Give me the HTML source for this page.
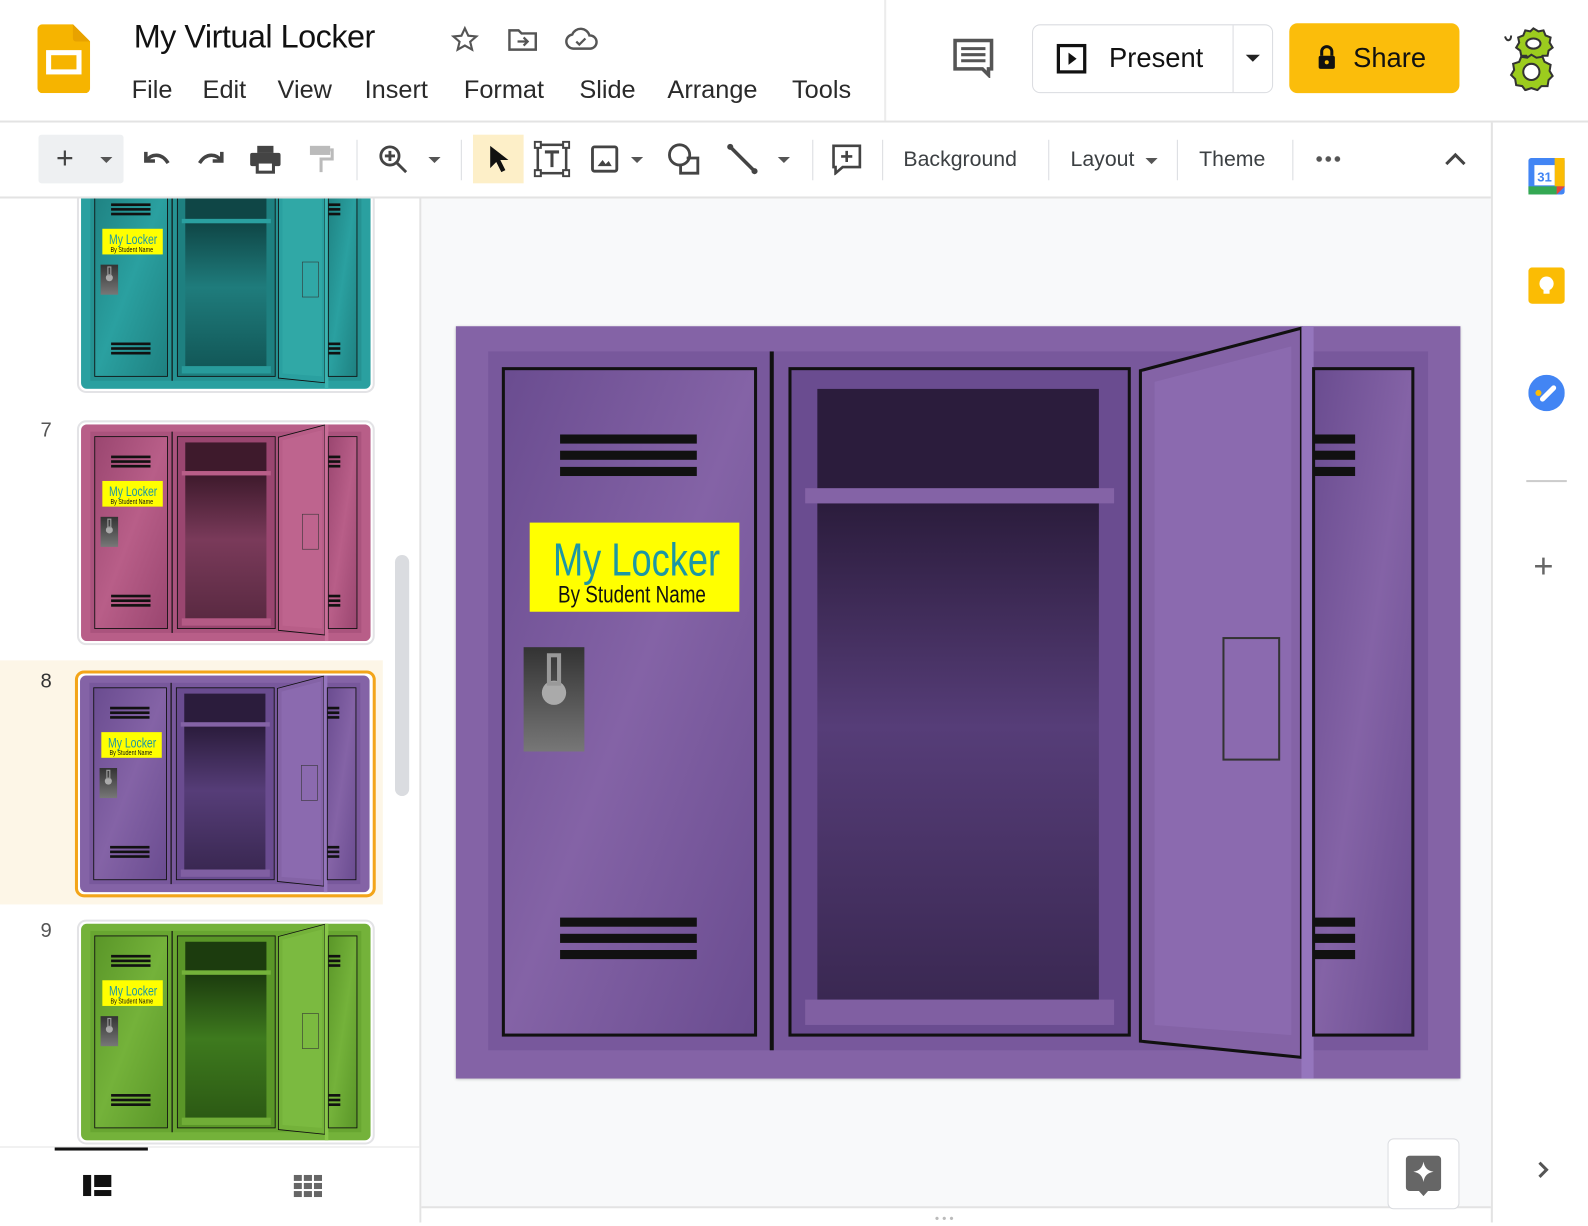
<!DOCTYPE html>
<html><head><meta charset="utf-8">
<style>
*{box-sizing:border-box;margin:0;padding:0}
html,body{width:1588px;height:1222px;overflow:hidden;background:#fff;font-family:"Liberation Sans",sans-serif;color:#222}
#w{position:absolute;left:0;top:0;width:1568px;height:1207px;transform:scale(1.0128);transform-origin:0 0;background:#fff}
.a{position:absolute}
.menu span{position:absolute;top:75px;font-size:25px;color:#2a2a2a}
.tb{position:absolute;top:157px;transform:translate(-50%,-50%)}
.tt{position:absolute;top:146px;font-size:21px;color:#3c4043}
.sep{position:absolute;top:138px;width:1px;height:40px;background:#dadce0}
.num{position:absolute;left:40px;font-size:20px;color:#555}
.th{position:absolute;left:76px;width:294px;height:222px;border:2px solid #e3e3e6;border-radius:9px;background:#fff;padding:2px;overflow:hidden}
.th svg{display:block;width:286px;height:214px;border-radius:6px}
</style></head><body>
<div id="w">
<!-- header -->
<div class="a" style="left:0;top:119px;width:1568px;height:2px;background:#e3e3e3"></div>
<div class="a" style="left:873px;top:0;width:2px;height:119px;background:#ececec"></div>
<svg class="a" style="left:37px;top:24px" width="52" height="68" viewBox="0 0 52 68"><path d="M5 0h30l17 17v46a5 5 0 0 1-5 5H5a5 5 0 0 1-5-5V5a5 5 0 0 1 5-5z" fill="#f6b400"/><path d="M35 0l17 17H38a3 3 0 0 1-3-3z" fill="#e8a200"/><rect x="11" y="28" width="30" height="19" fill="none" stroke="#fff" stroke-width="5"/></svg>
<div class="a" style="left:132px;top:18px;font-size:32px;color:#111;letter-spacing:-.5px">My Virtual Locker</div>
<svg class="a" style="left:445px;top:25px" width="28" height="28" viewBox="0 0 24 24"><path d="M12 2.5l2.9 6.3 6.8.6-5.2 4.5 1.6 6.7L12 17.1l-6.1 3.5 1.6-6.7L2.3 9.4l6.8-.6z" fill="none" stroke="#555" stroke-width="1.8"/></svg>
<svg class="a" style="left:501px;top:26px" width="30" height="26" viewBox="0 0 30 26"><path d="M2 4h9l3 3h14v16H2z" fill="none" stroke="#555" stroke-width="2.4"/><path d="M10 15h9M16 11l4 4-4 4" fill="none" stroke="#555" stroke-width="2.2"/></svg>
<svg class="a" style="left:557px;top:27px" width="34" height="24" viewBox="0 0 34 24"><path d="M9 21a7 7 0 0 1-1-13.9A9 9 0 0 1 25 8a6.5 6.5 0 0 1 1 13z" fill="none" stroke="#555" stroke-width="2.4"/><path d="M12 14l3 3 6-6" fill="none" stroke="#555" stroke-width="2.2"/></svg>
<div class="menu"><span style="left:130px">File</span><span style="left:200px">Edit</span><span style="left:274px">View</span><span style="left:360px">Insert</span><span style="left:458px">Format</span><span style="left:572px">Slide</span><span style="left:659px">Arrange</span><span style="left:782px">Tools</span></div>
<svg class="a" style="left:940px;top:37px" width="42" height="40" viewBox="0 0 42 40"><path d="M3 3h36v28h-3v6l-6-6H3z" fill="none" stroke="#555" stroke-width="3.5"/><path d="M9 11h24M9 17h24M9 23h24" stroke="#555" stroke-width="3"/></svg>
<div class="a" style="left:1019px;top:24px;width:238px;height:68px;border:1.5px solid #dadce0;border-radius:8px"></div>
<div class="a" style="left:1217px;top:25px;width:1px;height:66px;background:#dadce0"></div>
<svg class="a" style="left:1043px;top:43px" width="30" height="30" viewBox="0 0 30 30"><rect x="2" y="2" width="26" height="26" fill="none" stroke="#111" stroke-width="3.2"/><path d="M12 9l8 6-8 6z" fill="#111"/></svg>
<div class="a" style="left:1095px;top:42px;font-size:27px;color:#111">Present</div>
<div class="a" style="left:1230px;top:54px;border-left:7px solid transparent;border-right:7px solid transparent;border-top:7px solid #222"></div>
<div class="a" style="left:1273px;top:23px;width:168px;height:69px;background:#fbbd0b;border-radius:8px"></div>
<svg class="a" style="left:1300px;top:44px" width="20" height="26" viewBox="0 0 20 26"><path d="M5 11V7a5 5 0 0 1 10 0v4" fill="none" stroke="#111" stroke-width="3"/><rect x="2" y="11" width="16" height="13" rx="2" fill="#111"/><circle cx="10" cy="17.5" r="2" fill="#fbbd0b"/></svg>
<div class="a" style="left:1336px;top:42px;font-size:27px;color:#111">Share</div>
<svg class="a" style="left:1478px;top:26px" width="66" height="64" viewBox="0 0 66 64"><g fill="#9ccc1e" stroke="#333" stroke-width="2"><path d="M36 2l5 3 5-1 2 5 5 2-1 5 3 5-4 3-1 5-5 0-3 4-5-2-5 2-3-4-5 0-1-5-4-3 3-5-1-5 5-2 2-5 5 1z"/><path d="M34 28l5 3 6-1 2 5 6 3-1 6 3 5-4 4-1 6-6 0-4 4-6-2-6 2-3-4-6-1-1-6-4-4 3-5-1-6 6-2 2-5 6 1z"/></g><ellipse cx="36" cy="17" rx="7" ry="5" fill="#fff" stroke="#333" stroke-width="2"/><circle cx="34" cy="45" r="8" fill="#fff" stroke="#333" stroke-width="2"/><path d="M8 10c2 6 6 4 6-1" fill="none" stroke="#333" stroke-width="2"/></svg>
<!-- toolbar -->
<div class="a" style="left:0;top:194px;width:1472px;height:2px;background:#e3e3e3"></div>
<div class="a" style="left:1472px;top:121px;width:2px;height:1086px;background:#e3e3e3"></div>
<div class="a" style="left:38px;top:133px;width:84px;height:48px;background:#eef0f2;border-radius:3px"></div>
<div class="tb" style="left:64px;font-size:30px;color:#444">+</div>
<div class="a" style="left:99px;top:155px;border-left:6px solid transparent;border-right:6px solid transparent;border-top:6px solid #555"></div>
<svg class="tb" style="left:154px" width="32" height="24" viewBox="0 0 32 24"><path d="M6 5v9h9" fill="none" stroke="#444" stroke-width="3.5"/><path d="M6 14c5-7 15-9 22 2" fill="none" stroke="#444" stroke-width="3.5"/></svg>
<svg class="tb" style="left:209px" width="32" height="24" viewBox="0 0 32 24"><path d="M26 5v9h-9" fill="none" stroke="#444" stroke-width="3.5"/><path d="M26 14c-5-7-15-9-22 2" fill="none" stroke="#444" stroke-width="3.5"/></svg>
<svg class="tb" style="left:262px" width="32" height="30" viewBox="0 0 32 30"><rect x="8" y="2" width="16" height="7" fill="#444"/><rect x="1" y="9" width="30" height="13" rx="2" fill="#444"/><rect x="8" y="18" width="16" height="10" fill="#fff" stroke="#444" stroke-width="3"/></svg>
<svg class="tb" style="left:317px" width="26" height="30" viewBox="0 0 26 30"><rect x="2" y="2" width="20" height="9" fill="#bbb"/><path d="M22 6h2v9H13v13" fill="none" stroke="#bbb" stroke-width="3"/></svg>
<div class="sep" style="left:352px"></div>
<svg class="tb" style="left:388px" width="32" height="32" viewBox="0 0 32 32"><circle cx="13" cy="13" r="9" fill="none" stroke="#444" stroke-width="2.8"/><path d="M20 20l9 9M13 8v10M8 13h10" stroke="#444" stroke-width="2.8"/></svg>
<div class="a" style="left:423px;top:155px;border-left:6px solid transparent;border-right:6px solid transparent;border-top:6px solid #555"></div>
<div class="sep" style="left:455px"></div>
<div class="a" style="left:467px;top:133px;width:50px;height:48px;background:#fdefc8"></div>
<svg class="tb" style="left:492px" width="22" height="30" viewBox="0 0 22 30"><path d="M3 2v22l6-6 5 10 4-2-5-10h8z" fill="#111"/></svg>
<svg class="tb" style="left:545px" width="36" height="36" viewBox="0 0 36 36"><rect x="4" y="4" width="28" height="28" fill="none" stroke="#444" stroke-width="2.5"/><g fill="#fff" stroke="#444" stroke-width="2"><rect x="1" y="1" width="6" height="6"/><rect x="29" y="1" width="6" height="6"/><rect x="1" y="29" width="6" height="6"/><rect x="29" y="29" width="6" height="6"/></g><path d="M11 11h14M18 11v15" stroke="#444" stroke-width="3"/></svg>
<svg class="tb" style="left:597px" width="28" height="28" viewBox="0 0 28 28"><rect x="2" y="2" width="24" height="24" rx="2" fill="none" stroke="#444" stroke-width="2.8"/><path d="M7 21l5-6 3 4 3-3 3 5z" fill="#444"/></svg>
<div class="a" style="left:623px;top:155px;border-left:6px solid transparent;border-right:6px solid transparent;border-top:6px solid #555"></div>
<svg class="tb" style="left:675px" width="34" height="34" viewBox="0 0 34 34"><circle cx="13" cy="13" r="10" fill="none" stroke="#444" stroke-width="2.8"/><path d="M20 16h11v15H14v-9" fill="none" stroke="#444" stroke-width="2.8"/></svg>
<svg class="tb" style="left:733px" width="32" height="32" viewBox="0 0 32 32"><path d="M4 4l24 24" stroke="#444" stroke-width="3.5"/><circle cx="4" cy="4" r="3" fill="#444"/><circle cx="28" cy="28" r="3" fill="#444"/></svg>
<div class="a" style="left:768px;top:155px;border-left:6px solid transparent;border-right:6px solid transparent;border-top:6px solid #555"></div>
<div class="sep" style="left:802px"></div>
<svg class="tb" style="left:836px" width="32" height="32" viewBox="0 0 32 32"><path d="M3 3h26v21H12l-7 6V24H3z" fill="none" stroke="#444" stroke-width="2.6"/><path d="M16 8v11M10.5 13.5h11" stroke="#444" stroke-width="2.6"/></svg>
<div class="sep" style="left:871px"></div>
<div class="tt" style="left:892px">Background</div>
<div class="sep" style="left:1035px"></div>
<div class="tt" style="left:1057px">Layout</div>
<div class="a" style="left:1131px;top:156px;border-left:6px solid transparent;border-right:6px solid transparent;border-top:6px solid #555"></div>
<div class="sep" style="left:1162px"></div>
<div class="tt" style="left:1184px">Theme</div>
<div class="sep" style="left:1276px"></div>
<div class="a" style="left:1298px;top:154px;width:28px;height:6px;background:radial-gradient(circle,#555 2.5px,transparent 3px) 0 0/9px 6px repeat-x"></div>
<svg class="tb" style="left:1437px" width="24" height="16" viewBox="0 0 24 16"><path d="M3 13l9-9 9 9" fill="none" stroke="#444" stroke-width="3"/></svg>
<!-- right panel -->
<svg class="a" style="left:1509px;top:156px" width="36" height="36" viewBox="0 0 36 36"><rect x="0" y="0" width="36" height="36" rx="3" fill="#4285f4"/><rect x="26" y="0" width="10" height="28" fill="#fbbc04"/><rect x="0" y="28" width="28" height="8" fill="#34a853"/><path d="M28 28h8l-8 8z" fill="#ea4335"/><rect x="6" y="7" width="20" height="20" fill="#fff"/><text x="16" y="23" font-size="13" text-anchor="middle" fill="#4285f4" font-family="Liberation Sans" font-weight="bold">31</text></svg>
<svg class="a" style="left:1509px;top:264px" width="36" height="36" viewBox="0 0 36 36"><rect width="36" height="36" rx="4" fill="#fbbc04"/><circle cx="18" cy="16" r="7" fill="#fff"/><rect x="15" y="22" width="6" height="4" fill="#fff"/></svg>
<svg class="a" style="left:1509px;top:370px" width="36" height="36" viewBox="0 0 36 36"><circle cx="18" cy="18" r="18" fill="#4285f4"/><path d="M14 24l11-11" stroke="#fff" stroke-width="5" stroke-linecap="round"/><circle cx="10" cy="18" r="3" fill="#fbbc04"/></svg>
<div class="a" style="left:1507px;top:474px;width:40px;height:1.5px;background:#ccc"></div>
<div class="a" style="left:1514px;top:540px;font-size:34px;color:#666">+</div>
<svg class="a" style="left:1517px;top:1145px" width="14" height="20" viewBox="0 0 14 20"><path d="M3 3l7 7-7 7" fill="none" stroke="#555" stroke-width="3"/></svg>
<!-- canvas -->
<div class="a" style="left:416px;top:196px;width:1056px;height:996px;background:#f8f9fa"></div>
<div class="a" style="left:416px;top:1191px;width:1056px;height:2px;background:#e3e3e3"></div>
<div class="a" style="left:923px;top:1196px;font-size:12px;color:#bbb;letter-spacing:3px">•••</div>
<div class="a" id="main" style="left:450px;top:322px;width:992px;height:743px;box-shadow:0 1px 3px rgba(0,0,0,.25)"></div>
<div class="a" style="left:1370px;top:1124px;width:71px;height:70px;border:1.5px solid #dadce0;border-radius:6px;background:#fff"></div>
<svg class="a" style="left:1388px;top:1141px" width="35" height="40" viewBox="0 0 35 40"><path d="M4 0h27a4 4 0 0 1 4 4v27a4 4 0 0 1-4 4h-9l-4.5 5-4.5-5H4a4 4 0 0 1-4-4V4a4 4 0 0 1 4-4z" fill="#666"/><path d="M17.5 6c1 6 4 9 10 10-6 1-9 4-10 10-1-6-4-9-10-10 6-1 9-4 10-10z" fill="#fff"/></svg>
<!-- filmstrip -->
<div class="a" style="left:414px;top:196px;width:2px;height:1011px;background:#e3e3e3"></div>
<div class="a" style="left:0;top:196px;width:414px;height:937px;overflow:hidden">
 <div class="a" style="left:0;top:456px;width:378px;height:241px;background:#fdf6e7"></div>
 <div class="th" id="t6" style="top:-30px"></div>
 <div class="num" style="top:218px">7</div>
 <div class="th" id="t7" style="top:219px"></div>
 <div class="num" style="top:466px;color:#333">8</div>
 <div class="th" id="t8" style="top:466px;border:3px solid #f3a51a;left:74px;width:297px;height:224px"></div>
 <div class="num" style="top:712px">9</div>
 <div class="th" id="t9" style="top:712px"></div>
 <div class="a" style="left:390px;top:352px;width:14px;height:238px;background:#dadce0;border-radius:7px"></div>
</div>
<div class="a" style="left:0;top:1132px;width:414px;height:75px;background:#fff;border-top:1.5px solid #e3e3e3"></div>
<div class="a" style="left:54px;top:1133px;width:92px;height:3px;background:#111"></div>
<svg class="a" style="left:82px;top:1160px" width="28" height="21" viewBox="0 0 28 21"><rect x="0" y="0" width="8" height="21" fill="#111"/><rect x="11" y="0" width="17" height="12" fill="#111"/><rect x="11" y="15" width="17" height="6" fill="#111"/></svg>
<svg class="a" style="left:290px;top:1160px" width="28" height="22" viewBox="0 0 28 22"><g fill="#666"><rect x="0" y="0" width="8" height="6"/><rect x="10" y="0" width="8" height="6"/><rect x="20" y="0" width="8" height="6"/><rect x="0" y="8" width="8" height="6"/><rect x="10" y="8" width="8" height="6"/><rect x="20" y="8" width="8" height="6"/><rect x="0" y="16" width="8" height="6"/><rect x="10" y="16" width="8" height="6"/><rect x="20" y="16" width="8" height="6"/></g></svg>
</div>
<script>
function lk(id,c,w,h){
var p=id;
return '<svg width="'+w+'" height="'+h+'" viewBox="0 0 992 743" preserveAspectRatio="none"><defs>'+
'<linearGradient id="gi'+p+'" x1="0" y1="0" x2="0" y2="1"><stop offset="0" stop-color="'+c.i1+'"/><stop offset="0.45" stop-color="'+c.i2+'"/><stop offset="1" stop-color="'+c.i3+'"/></linearGradient>'+
'<linearGradient id="gl'+p+'" x1="0" y1="0" x2="1" y2="1"><stop offset="0" stop-color="'+c.d+'"/><stop offset="0.5" stop-color="'+c.b+'"/><stop offset="1" stop-color="'+c.d+'"/></linearGradient>'+
'<linearGradient id="gk'+p+'" x1="0" y1="0" x2="0" y2="1"><stop offset="0" stop-color="#333"/><stop offset="1" stop-color="#777"/></linearGradient></defs>'+
'<rect width="992" height="743" fill="'+c.b+'"/>'+
'<rect x="32" y="25" width="928" height="690" fill="'+c.d+'" opacity=".45"/>'+
'<rect x="47" y="42" width="249" height="658" fill="url(#gl'+p+')" stroke="#111" stroke-width="3"/>'+
'<g fill="#111"><rect x="103" y="107" width="135" height="9"/><rect x="103" y="123" width="135" height="9"/><rect x="103" y="139" width="135" height="9"/><rect x="103" y="584" width="135" height="9"/><rect x="103" y="600" width="135" height="9"/><rect x="103" y="616" width="135" height="9"/></g>'+
'<rect x="73" y="194" width="207" height="88" fill="#ffff00"/>'+
'<text x="96" y="246" font-family="Liberation Sans Narrow,Liberation Sans,sans-serif" font-size="46" fill="#1c97a4" textLength="165" lengthAdjust="spacingAndGlyphs">My Locker</text>'+
'<text x="101" y="273" font-family="Liberation Sans Narrow,Liberation Sans,sans-serif" font-size="24" fill="#111" textLength="146" lengthAdjust="spacingAndGlyphs">By Student Name</text>'+
'<rect x="67" y="317" width="60" height="103" fill="url(#gk'+p+')"/>'+
'<circle cx="97" cy="362" r="12" fill="#aaa"/><rect x="92" y="325" width="10" height="28" fill="none" stroke="#999" stroke-width="4"/>'+
'<rect x="310" y="25" width="4" height="690" fill="#111"/>'+
'<rect x="330" y="42" width="335" height="658" fill="'+c.d+'" stroke="#111" stroke-width="3"/>'+
'<rect x="357" y="62" width="278" height="100" fill="'+c.i1+'"/>'+
'<rect x="357" y="175" width="278" height="490" fill="url(#gi'+p+')"/>'+
'<rect x="345" y="160" width="305" height="15" fill="'+c.b+'"/>'+
'<rect x="345" y="665" width="305" height="25" fill="'+c.b+'" opacity=".85"/>'+
'<polygon points="676,44 835,2 835,722 676,706" fill="'+c.b+'" stroke="#111" stroke-width="3"/>'+
'<polygon points="690,55 825,20 825,700 690,690" fill="'+c.l+'" opacity=".4"/>'+
'<rect x="835" y="0" width="12" height="743" fill="'+c.l+'"/>'+
'<rect x="758" y="308" width="55" height="120" fill="none" stroke="#333" stroke-width="2"/>'+
'<rect x="847" y="42" width="98" height="658" fill="url(#gl'+p+')" stroke="#111" stroke-width="3"/>'+
'<g fill="#111"><rect x="848" y="107" width="40" height="9"/><rect x="848" y="123" width="40" height="9"/><rect x="848" y="139" width="40" height="9"/><rect x="848" y="584" width="40" height="9"/><rect x="848" y="600" width="40" height="9"/><rect x="848" y="616" width="40" height="9"/></g></svg>';
}
var P={b:'#8463a6',d:'#6a4c90',i1:'#2b1c3c',i2:'#563d78',i3:'#3a2852',l:'#9576bd'};
var T={b:'#2aa0a0',d:'#1e8080',i1:'#0f4646',i2:'#1f7c7c',i3:'#125858',l:'#3ab3b0'};
var K={b:'#b85e88',d:'#9a4670',i1:'#3e1a2c',i2:'#7a3a5a',i3:'#5a2a42',l:'#c86e98'};
var G={b:'#74b23a',d:'#5a9628',i1:'#1c3c0e',i2:'#3e7a1e',i3:'#2c5a14',l:'#88c64a'};
document.getElementById('main').innerHTML=lk('m',P,992,743);
document.getElementById('t6').innerHTML=lk('a',T,286,214);
document.getElementById('t7').innerHTML=lk('b',K,286,214);
document.getElementById('t8').innerHTML=lk('c',P,286,214);
document.getElementById('t9').innerHTML=lk('d',G,286,214);
</script>
</body></html>
